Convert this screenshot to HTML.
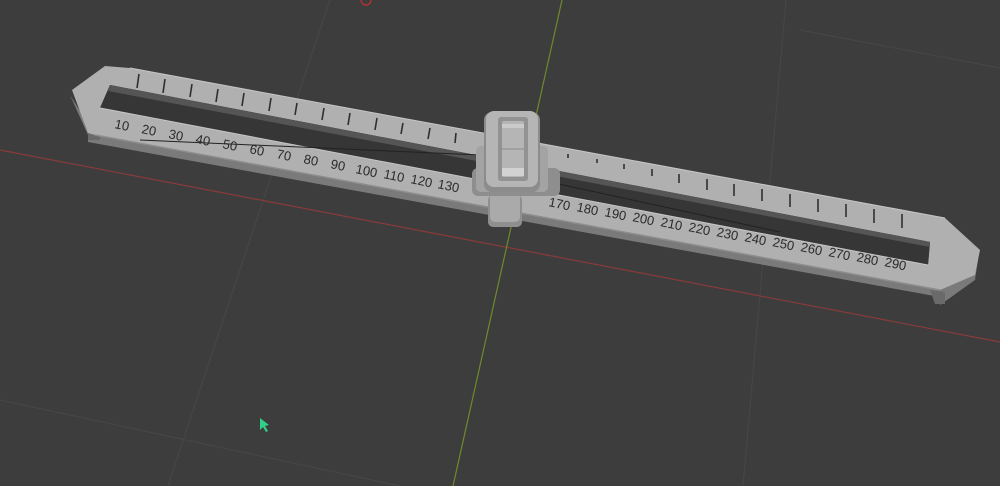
<!DOCTYPE html>
<html><head><meta charset="utf-8"><style>
html,body{margin:0;padding:0;background:#3d3d3d;overflow:hidden}
svg{display:block}
text{font-family:"Liberation Sans",sans-serif;font-size:13px;fill:#2a2a2a}
</style></head><body>
<svg width="1000" height="486" viewBox="0 0 1000 486" xmlns="http://www.w3.org/2000/svg">
<rect width="1000" height="486" fill="#3d3d3d"/>
<g stroke="#474747" stroke-width="1" fill="none">
<line x1="330" y1="0" x2="168" y2="486"/>
<line x1="786" y1="0" x2="743" y2="486"/>
<line x1="800" y1="30" x2="1000" y2="68"/>
<line x1="0" y1="400" x2="400" y2="486"/>
</g>
<line x1="0" y1="150" x2="1000" y2="342" stroke="#8a3a3a" stroke-width="1.2"/>
<line x1="562" y1="0" x2="453" y2="486" stroke="#6e8a2c" stroke-width="1.2"/>
<circle cx="366" cy="0" r="5" fill="none" stroke="#a33" stroke-width="1.5"/>
<polygon points="70,95 88,135 88,142 940,297 940,305 975,280 978,260 967,270 940,290 95,135" fill="#7a7a7a"/>
<polygon points="88,132 100,132 100,140 88,140" fill="#6a6a6a"/>
<polygon points="930,290 945,292 945,304 935,304" fill="#6a6a6a"/>
<path d="M72,90 L105,66 L130,68 L945,218 L980,250 L975,275 L940,290 L95,135 L88,133 Z M110,85 L100,108 L928,265 L930,242 Z" fill="#b0b0b0" fill-rule="evenodd"/>
<path d="M110,85 L100,108 L928,265 L930,242 Z" fill="#363636"/>
<polygon points="110,85 930,242 930,247 108,91" fill="#555"/>
<line x1="130" y1="68" x2="945" y2="218" stroke="#c6c6c6" stroke-width="1"/>
<line x1="100" y1="108" x2="928" y2="265" stroke="#c6c6c6" stroke-width="1"/>
<line x1="95" y1="135" x2="940" y2="290" stroke="#8d8d8d" stroke-width="1.5"/>
<line x1="140" y1="140" x2="480" y2="155" stroke="#222" stroke-width="1"/>
<line x1="540" y1="180" x2="780" y2="232" stroke="#222" stroke-width="1"/>
<g stroke="#2f2f2f" stroke-width="1.6">
<line x1="139" y1="74" x2="137" y2="88"/><line x1="165" y1="79" x2="163" y2="93"/>
<line x1="192" y1="84" x2="190" y2="97"/><line x1="218" y1="89" x2="216" y2="102"/>
<line x1="244" y1="93" x2="242" y2="106"/><line x1="271" y1="98" x2="269" y2="111"/>
<line x1="297" y1="103" x2="295" y2="115"/><line x1="324" y1="108" x2="322" y2="120"/>
<line x1="350" y1="113" x2="348" y2="125"/><line x1="377" y1="118" x2="375" y2="130"/>
<line x1="403" y1="123" x2="401" y2="134"/><line x1="430" y1="128" x2="428" y2="139"/>
<line x1="456" y1="133" x2="455" y2="143"/>
<line x1="568" y1="154" x2="568" y2="158"/><line x1="597" y1="159" x2="597" y2="163"/>
<line x1="624" y1="164" x2="624" y2="169"/><line x1="652" y1="169" x2="652" y2="176"/>
<line x1="679" y1="174" x2="679" y2="183"/><line x1="707" y1="179" x2="707" y2="190"/>
<line x1="734" y1="184" x2="734" y2="196"/><line x1="762" y1="189" x2="762" y2="201"/>
<line x1="790" y1="194" x2="790" y2="207"/><line x1="818" y1="199" x2="818" y2="212"/>
<line x1="846" y1="204" x2="846" y2="217"/><line x1="874" y1="209" x2="874" y2="223"/>
<line x1="902" y1="214" x2="902" y2="228"/>
</g>
<g>
<text transform="translate(114,128) rotate(12)">10</text>
<text transform="translate(141,133) rotate(12)">20</text>
<text transform="translate(168,138) rotate(12)">30</text>
<text transform="translate(195,143) rotate(12)">40</text>
<text transform="translate(222,148) rotate(12)">50</text>
<text transform="translate(249,153) rotate(12)">60</text>
<text transform="translate(276,158) rotate(12)">70</text>
<text transform="translate(303,163) rotate(12)">80</text>
<text transform="translate(330,168) rotate(12)">90</text>
<text transform="translate(355,173) rotate(12)">100</text>
<text transform="translate(383,178) rotate(12)">110</text>
<text transform="translate(410,183) rotate(12)">120</text>
<text transform="translate(437,188) rotate(12)">130</text>
<text transform="translate(548,206) rotate(12)">170</text>
<text transform="translate(576,211) rotate(12)">180</text>
<text transform="translate(604,216) rotate(12)">190</text>
<text transform="translate(632,221) rotate(12)">200</text>
<text transform="translate(660,226) rotate(12)">210</text>
<text transform="translate(688,231) rotate(12)">220</text>
<text transform="translate(716,236) rotate(12)">230</text>
<text transform="translate(744,241) rotate(12)">240</text>
<text transform="translate(772,246) rotate(12)">250</text>
<text transform="translate(800,251) rotate(12)">260</text>
<text transform="translate(828,256) rotate(12)">270</text>
<text transform="translate(856,261) rotate(12)">280</text>
<text transform="translate(884,266) rotate(12)">290</text>
</g>
<rect x="488" y="195" width="34" height="32" rx="5" fill="#8f8f8f"/>
<rect x="490" y="192" width="30" height="30" rx="5" fill="#aaa"/>
<rect x="472" y="168" width="88" height="28" rx="6" fill="#8e8e8e"/>
<rect x="476" y="146" width="18" height="46" rx="5" fill="#a3a3a3"/>
<rect x="532" y="146" width="16" height="46" rx="5" fill="#a3a3a3"/>
<rect x="484" y="112" width="56" height="80" rx="8" fill="#8c8c8c"/>
<rect x="486" y="111" width="52" height="76" rx="8" fill="#b5b5b5"/>
<rect x="498" y="117" width="30" height="64" rx="3" fill="#929292"/>
<rect x="502" y="121" width="22" height="56" rx="2" fill="#b5b5b5"/>
<line x1="502" y1="149" x2="524" y2="149" stroke="#8a8a8a"/>
<rect x="502" y="168" width="22" height="8" fill="#d2d2d2"/>
<rect x="502" y="124" width="22" height="4" fill="#cacaca"/>
<polygon points="260,418 260,430 263,427 266,432 268,431 265,426 269,425" fill="#2fd08a"/>
</svg>
</body></html>
